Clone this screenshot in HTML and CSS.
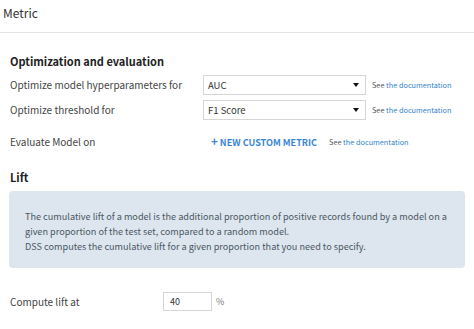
FILE: index.html
```html
<!DOCTYPE html>
<html>
<head>
<meta charset="utf-8">
<link rel="stylesheet" href="styles.css">
</head>
<body>
<div class="header">Metric</div>
<div class="content">
  <h2 class="section-title first">Optimization and evaluation</h2>
  <div class="form-grid">
    <div class="label">Optimize model hyperparameters for</div>
    <div class="select"><span>AUC</span><span class="caret"></span></div>
    <div class="doc">See <a>the documentation</a></div>

    <div class="label">Optimize threshold for</div>
    <div class="select"><span>F1 Score</span><span class="caret"></span></div>
    <div class="doc">See <a>the documentation</a></div>

    <div class="label row3">Evaluate Model on</div>
    <div class="row3 custom"><span class="btn-add"><span class="plus">+</span> NEW CUSTOM METRIC</span><span class="doc">See <a>the documentation</a></span></div>
  </div>

  <h2 class="section-title lift">Lift</h2>
  <div class="info">
    The cumulative lift of a model is the additional proportion of positive records found by a model on a given proportion of the test set, compared to a random model.<br>
    DSS computes the cumulative lift for a given proportion that you need to specify.
  </div>

  <div class="compute">
    <div class="label">Compute lift at</div>
    <div class="num-input">40</div>
    <div class="pct">%</div>
  </div>
</div>
</body>
</html>
```

FILE: styles.css
```css
* { box-sizing: border-box; }
body {
  margin: 0;
  font-family: "Noto Sans CJK SC", "Lato", sans-serif;
  color: #444;
  background: #fff;
}
.header {
  height: 33px;
  padding: 4px 0 0 3px;
  font-size: 12px;
  line-height: 18px;
  color: #333;
  border-bottom: 1px solid #e3e3e3;
}
.content {
  padding: 0 9px 0 10px;
}
.section-title {
  margin: 0;
  font-size: 11px;
  font-weight: 700;
  color: #222;
  line-height: 18px;
}
.section-title.first { margin-top: 19px; }
.form-grid {
  display: grid;
  grid-template-columns: 193px 163px auto;
  grid-auto-rows: 20px;
  row-gap: 5px;
  margin-top: 5px;
  align-items: center;
}
.label {
  font-size: 10px;
  line-height: 14px;
  color: #444;
  white-space: nowrap;
}
.select {
  height: 20px;
  border: 1px solid #d6d6d6;
  display: flex;
  align-items: center;
  justify-content: space-between;
  padding: 0 4px 0 4px;
  font-size: 9.5px;
  line-height: 13px;
  color: #333;
}
.caret {
  width: 0; height: 0;
  margin-right: 2px;
  border-left: 3px solid transparent;
  border-right: 3px solid transparent;
  border-top: 4px solid #111;
}
.doc {
  font-size: 7.3px;
  line-height: 10px;
  color: #555;
  padding-left: 6px;
  white-space: nowrap;
}
.doc a { color: #2f7fcc; }
.row3 { margin-top: 13px; }
.custom {
  grid-column: 2 / 4;
  display: flex;
  align-items: center;
  white-space: nowrap;
}
.custom .doc { padding-left: 0; }
.btn-add {
  color: #3a86d4;
  font-weight: 700;
  font-size: 9.1px;
  line-height: 12px;
  padding-left: 8px;
  padding-right: 12px;
}
.plus { font-size: 11.5px; }
.section-title.lift { margin-top: 23px; }
.info {
  margin-top: 5px;
  width: 456px;
  margin-left: -1px;
  background: #dde6ee;
  border-radius: 4px;
  padding: 18px 6px 14px 16px;
  font-size: 9.15px;
  line-height: 15px;
  color: #4a5764;
}
.compute {
  display: flex;
  align-items: center;
  margin-top: 24px;
}
.compute .label { width: 153px; }
.num-input {
  width: 49px;
  height: 19px;
  border: 1px solid #d6d6d6;
  font-size: 9px;
  line-height: 12px;
  padding: 3px 0 0 6px;
  color: #333;
}
.pct {
  font-size: 9px;
  color: #777;
  padding-left: 4px;
}
```
